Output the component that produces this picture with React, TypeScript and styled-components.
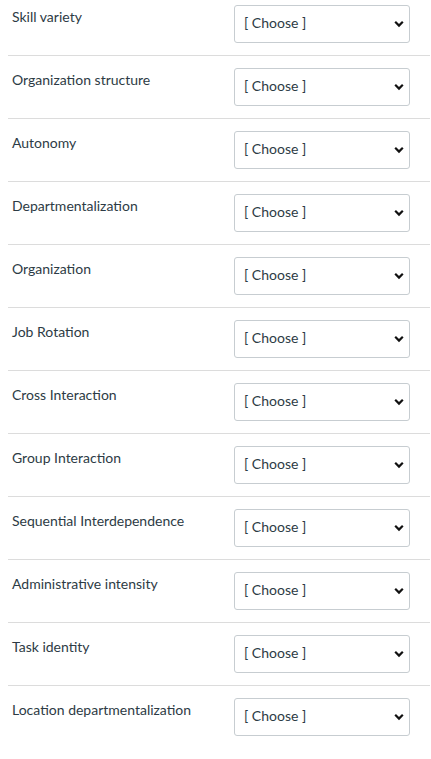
import React from "react";
import styled, { createGlobalStyle } from "styled-components";

const Global = createGlobalStyle`
  html, body { margin: 0; padding: 0; background: #fff; }
  body { font-family: Lato, "Helvetica Neue", Arial, sans-serif; color: #2d3b45; }
`;

const List = styled.div`
  margin: 0 1px 0 8px;
`;

const Row = styled.div<{ $last?: boolean; $first?: boolean }>`
  display: flex;
  align-items: flex-start;
  padding: ${(p) => (p.$first ? "5px" : "12px")} 0 12px 0;
  border-bottom: ${(p) => (p.$last ? "none" : "1px solid #dcdcdc")};
`;

const Label = styled.div`
  width: 226px;
  padding: 2px 0 0 4px;
  box-sizing: border-box;
  font-size: 14px;
  line-height: 20px;
  color: #2d3b45;
`;

const SelectWrap = styled.div`
  position: relative;
  width: 176px;
  height: 38px;
`;

const Select = styled.select`
  appearance: none;
  -webkit-appearance: none;
  width: 100%;
  height: 100%;
  box-sizing: border-box;
  border: 1px solid #c7cdd1;
  border-radius: 3px;
  background: #fff;
  padding: 0 28px 4px 9px;
  font-family: Lato, "Helvetica Neue", Arial, sans-serif;
  font-size: 14px;
  color: #2d3b45;
  outline: none;
`;

const Chevron = styled.svg`
  position: absolute;
  right: 6px;
  top: 15px;
  width: 10px;
  height: 8px;
  pointer-events: none;
`;

const labels = [
  "Skill variety",
  "Organization structure",
  "Autonomy",
  "Departmentalization",
  "Organization",
  "Job Rotation",
  "Cross Interaction",
  "Group Interaction",
  "Sequential Interdependence",
  "Administrative intensity",
  "Task identity",
  "Location departmentalization",
];

export default function App() {
  return (
    <>
      <Global />
      <List>
        {labels.map((l, i) => (
          <Row key={l} $first={i === 0} $last={i === labels.length - 1}>
            <Label>{l}</Label>
            <SelectWrap>
              <Select defaultValue="">
                <option value="">[ Choose ]</option>
              </Select>
              <Chevron viewBox="0 0 10 8">
                <path d="M1.2 1.8 L5 5.6 L8.8 1.8" fill="none" stroke="#111" strokeWidth="2.2" />
              </Chevron>
            </SelectWrap>
          </Row>
        ))}
      </List>
    </>
  );
}
